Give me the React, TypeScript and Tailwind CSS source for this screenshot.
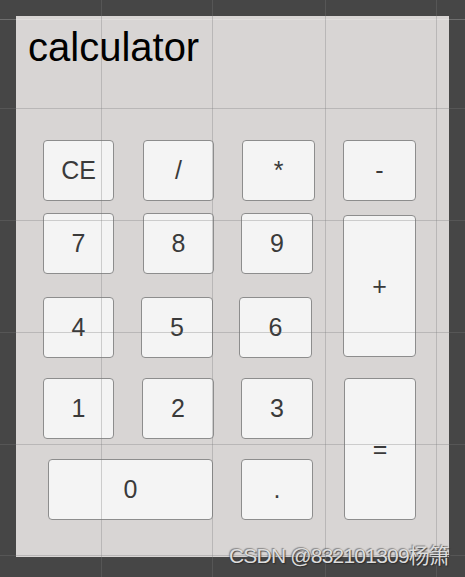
import React from 'react';

type Key = {
  label: string;
  cls: string;
};

// grid tracks: rows use spacer tracks so the uneven gaps of the original layout line up
const KEYS: Key[] = [
  { label: 'CE', cls: 'col-start-1 row-start-1' },
  { label: '/', cls: 'col-start-2 row-start-1 ml-[1px]' },
  { label: '*', cls: 'col-start-3 row-start-1' },
  { label: '-', cls: 'col-start-4 row-start-1' },
  { label: '7', cls: 'col-start-1 row-start-3' },
  { label: '8', cls: 'col-start-2 row-start-3 ml-[1px]' },
  { label: '9', cls: 'col-start-3 row-start-3 -ml-[1px] mr-[2px]' },
  { label: '+', cls: 'col-start-4 row-start-3 row-span-3 mt-[2px] mb-[1px]' },
  { label: '4', cls: 'col-start-1 row-start-5' },
  { label: '5', cls: 'col-start-2 row-start-5 -ml-[1px] mr-[1px]' },
  { label: '6', cls: 'col-start-3 row-start-5 -ml-[3px] mr-[3px]' },
  { label: '1', cls: 'col-start-1 row-start-7' },
  { label: '2', cls: 'col-start-2 row-start-7' },
  { label: '3', cls: 'col-start-3 row-start-7 -ml-[1px] mr-[2px]' },
  { label: '=', cls: 'col-start-4 row-start-7 row-span-3 ml-[1px]' },
  { label: '0', cls: 'col-start-1 col-span-2 row-start-9 ml-[5px] mr-[1px]' },
  { label: '.', cls: 'col-start-3 row-start-9 -ml-[1px] mr-[2px]' },
];

const V_LINES = [101, 212, 325, 436];
const H_LINES = [108, 220, 332, 444, 555];

function GridOverlay() {
  return (
    <svg className="absolute inset-0 pointer-events-none" width={465} height={577}>
      <line x1={0} y1={19.5} x2={465} y2={19.5} stroke="rgba(255,255,255,0.22)" strokeWidth={1} />
      {V_LINES.map((x) => (
        <line key={`v${x}`} x1={x + 0.5} y1={0} x2={x + 0.5} y2={577} stroke="rgba(120,120,120,0.32)" strokeWidth={1} />
      ))}
      {H_LINES.map((y) => (
        <line key={`h${y}`} x1={0} y1={y + 0.5} x2={465} y2={y + 0.5} stroke="rgba(120,120,120,0.32)" strokeWidth={1} />
      ))}
    </svg>
  );
}

export default function App() {
  return (
    <div
      className="relative w-[465px] h-[577px] overflow-hidden bg-[#464646] pt-[16px] pl-[16px]"
      style={{ fontFamily: '"Liberation Sans", Arial, sans-serif' }}
    >
      <div className="w-[433px] h-[541px] bg-[#d8d5d4]">
        <div className="h-[84px] pl-[12px] pt-[11px]">
          <h1 className="text-[40px] leading-[40px] text-black">calculator</h1>
        </div>
        <div className="grid grid-cols-[71px_72px_73px_73px] grid-rows-[61px_12px_61px_23px_61px_20px_61px_20px_61px] gap-x-[28px] pl-[27px] pt-[40px]">
          {KEYS.map((k) => (
            <button
              key={k.label}
              type="button"
              className={`${k.cls} flex items-center justify-center rounded-[4px] border border-[#8d8d8d] bg-[#f4f4f4] text-[25px] leading-none text-[#3a3a3a]`}
            >
              {k.label}
            </button>
          ))}
        </div>
      </div>

      <GridOverlay />

      <div
        className="absolute left-[229px] top-[544px] text-[21px] leading-[24px] tracking-[-0.8px] text-[#dcdcdc] whitespace-nowrap"
        style={{
          fontFamily: '"Liberation Sans", Arial, "Noto Sans CJK SC", sans-serif',
          textShadow: '1px 1px 1px rgba(40,40,40,0.8), -1px -1px 1px rgba(60,60,60,0.5)',
        }}
      >
        CSDN @832101309杨箫
      </div>
    </div>
  );
}
